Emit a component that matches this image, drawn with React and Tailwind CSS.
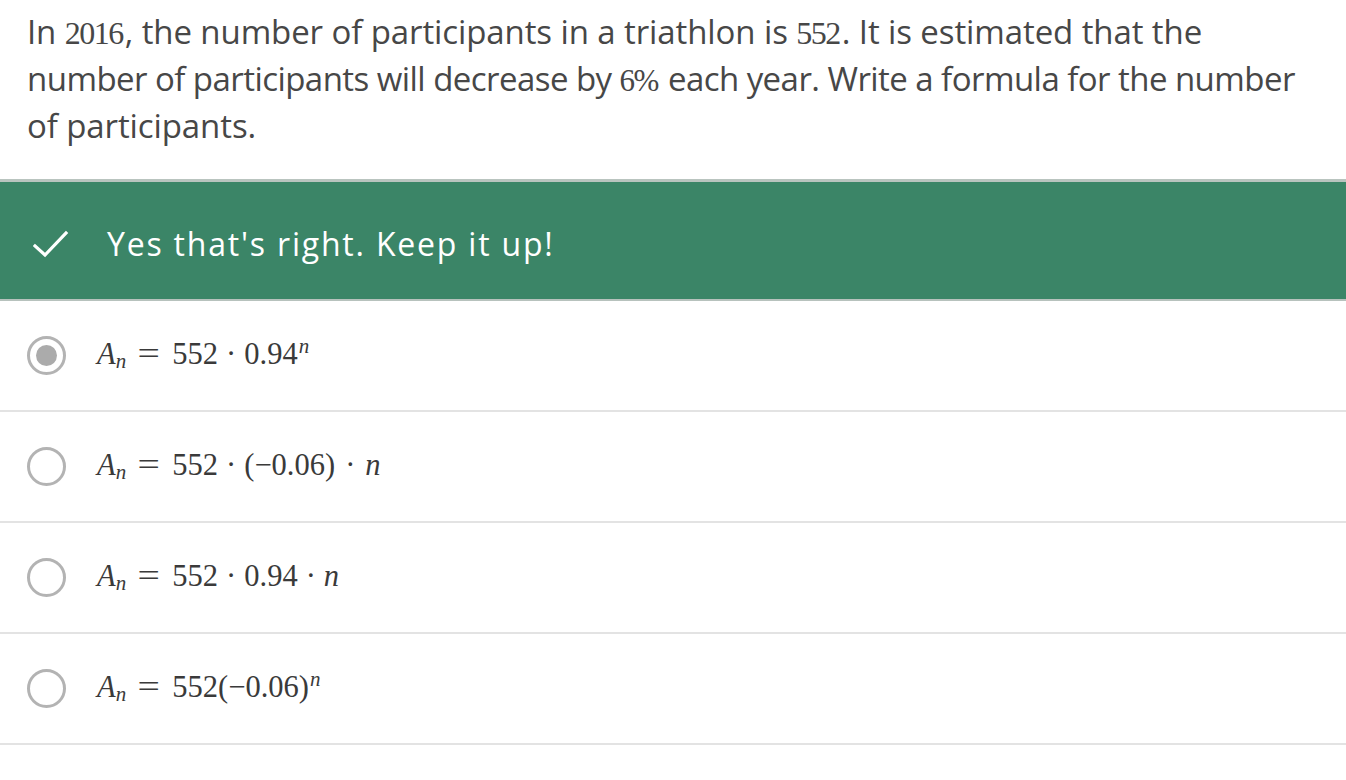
import { useState } from 'react'

function Dot() {
  return <span className="mx-[8px]">·</span>
}

function Sup() {
  return <sup className="italic text-[21px] -top-[11px] ml-[1px]">n</sup>
}

const options = [
  { id: 'a', body: <>552<Dot />0.94<Sup /></> },
  { id: 'b', body: <>552<Dot />(−0.06)<span className="mx-[10px]">·</span><span className="italic">n</span></> },
  { id: 'c', body: <>552<Dot />0.94<Dot /><span className="italic">n</span></> },
  { id: 'd', body: <>552(−0.06)<Sup /></> },
]

function Radio({ checked }) {
  return (
    <span className="w-[39px] h-[39px] rounded-full border-[3.5px] border-[#b3b3b3] flex items-center justify-center shrink-0">
      {checked && <span className="w-[21px] h-[21px] rounded-full bg-[#ababab]" />}
    </span>
  )
}

function Formula({ children }) {
  return (
    <span className="font-['Liberation_Serif',serif] text-[30.5px] text-[#3a3a3a] whitespace-pre">
      <span className="italic">A</span>
      <sub className="italic text-[21px] -bottom-[4px]">n</sub>
      <span className="inline-block ml-[14px] mr-[15px] scale-x-[1.3]">=</span>
      {children}
    </span>
  )
}

function Num({ children }) {
  return <span className="font-['Liberation_Serif',serif] text-[32px] leading-none tracking-[-1.5px] pr-[2px]">{children}</span>
}

export default function App() {
  const [picked, setPicked] = useState('a')

  return (
    <div className="w-[1346px] h-[780px] bg-white font-['Open_Sans',sans-serif] overflow-hidden">
      <p className="pl-[27px] pt-[8px] pb-[30px] text-[33px] leading-[47px] text-[#474747] tracking-[-0.1px] whitespace-nowrap">
        In <Num>2016</Num>, the number of participants in a triathlon is <Num>552</Num>. It is estimated that the
        <br />
        <span className="tracking-[-0.55px]">
          number of participants will decrease by <span className="font-['Liberation_Serif',serif] text-[31px] leading-none tracking-[-1.5px] pr-[2px]">6%</span> each year. Write a formula for the number
        </span>
        <br />
        of participants.
      </p>

      <div className="border-t-[3px] border-t-[#b9c4bf] border-b-[2px] border-b-[#b7c2bd] bg-[#3b8567] h-[122px] flex items-center pl-[33px]">
        <svg width="36" height="28" viewBox="0 0 36 28" fill="none" stroke="white" strokeWidth="3.2" strokeLinecap="square" className="mt-[6px]">
          <path d="M2 16 L12 25 L33 3" />
        </svg>
        <span className="ml-[38px] mt-[7px] text-white text-[32px] tracking-[1.8px]">Yes that's right. Keep it up!</span>
      </div>

      <div className="flex flex-col">
        {options.map((o) => (
          <label
            key={o.id}
            onClick={() => setPicked(o.id)}
            className="h-[111px] border-b-[2px] border-[#e3e3e3] flex items-center pl-[27px] pb-[1px] cursor-pointer"
          >
            <Radio checked={picked === o.id} />
            <span className="ml-[31px]">
              <Formula>{o.body}</Formula>
            </span>
          </label>
        ))}
      </div>
    </div>
  )
}
